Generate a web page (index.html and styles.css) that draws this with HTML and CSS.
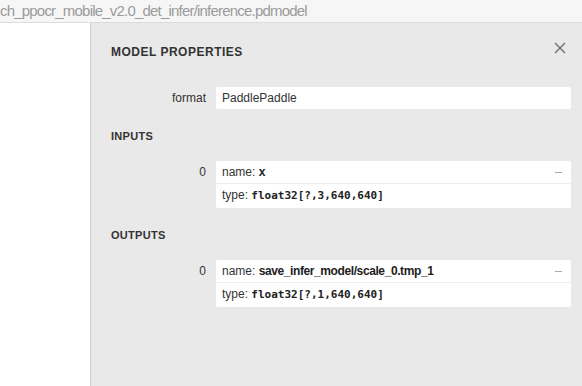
FILE: index.html
```html
<!DOCTYPE html>
<html lang="en">
<head>
    <meta charset="UTF-8">
    <meta name="viewport" content="width=device-width, initial-scale=1.0">
    <title>inference.pdmodel</title>
    <link rel="stylesheet" href="styles.css">
</head>
<body>
    <div class="titlebar">
        <span class="path">ch_ppocr_mobile_v2.0_det_infer/inference.pdmodel</span>
    </div>
    <div class="workspace">
        <div class="graph"></div>
        <aside class="sidebar">
            <div class="sidebar-header">
                <h1 class="sidebar-title">MODEL PROPERTIES</h1>
                <button class="sidebar-close" aria-label="Close">
                    <svg width="12" height="12" viewBox="0 0 12 12">
                        <path d="M1 1L11 11M11 1L1 11" stroke="#777" stroke-width="1.5" fill="none"/>
                    </svg>
                </button>
            </div>

            <div class="item first">
                <div class="item-name">format</div>
                <div class="item-value">
                    <div class="value-line">PaddlePaddle</div>
                </div>
            </div>

            <div class="section-header">INPUTS</div>
            <div class="item">
                <div class="item-name">0</div>
                <div class="item-value tall">
                    <div class="value-line">name: <b>x</b><span class="expander"></span></div>
                    <div class="value-line">type: <code>float32[?,3,640,640]</code></div>
                </div>
            </div>

            <div class="section-header">OUTPUTS</div>
            <div class="item">
                <div class="item-name">0</div>
                <div class="item-value tall">
                    <div class="value-line">name: <b>save_infer_model/scale_0.tmp_1</b><span class="expander"></span></div>
                    <div class="value-line">type: <code>float32[?,1,640,640]</code></div>
                </div>
            </div>
        </aside>
    </div>
</body>
</html>
```

FILE: styles.css
```css
* {
    margin: 0;
    padding: 0;
    box-sizing: border-box;
}

body {
    font-family: 'Liberation Sans', Arial, sans-serif;
    font-size: 12px;
    color: #333333;
    height: 100vh;
    overflow: hidden;
    background-color: #ffffff;
}

.titlebar {
    height: 23px;
    line-height: 22px;
    background-color: #f6f6f6;
    border-bottom: 1px solid #dcdcdc;
    color: #9b9b9b;
    font-family: 'Liberation Sans', Arial, sans-serif;
    font-size: 15px;
    letter-spacing: -0.8px;
    white-space: nowrap;
    overflow: hidden;
}

.workspace {
    display: flex;
    height: calc(100vh - 23px);
}

.graph {
    width: 90px;
    background-color: #ffffff;
}

.sidebar {
    flex: 1;
    background-color: #e9e9e9;
    border-left: 1px solid #cfcfcf;
    padding: 0 11px 0 20px;
}

.sidebar-header {
    position: relative;
    padding-top: 22px;
}

.sidebar-title {
    font-size: 12px;
    font-weight: bold;
    letter-spacing: 0.5px;
    line-height: 14px;
    color: #333333;
}

.sidebar-close {
    position: absolute;
    top: 19px;
    right: 5px;
    width: 12px;
    height: 12px;
    border: none;
    background: none;
    display: flex;
    cursor: pointer;
}

.item {
    display: grid;
    grid-template-columns: 95px 1fr;
    column-gap: 10px;
}

.item.first {
    margin-top: 28px;
}

.item-name {
    text-align: right;
    line-height: 14px;
    padding-top: 4px;
}

.item-value {
    background-color: #ffffff;
    border-radius: 2px;
}

.item-value.tall {
    padding-bottom: 1px;
}

.value-line {
    position: relative;
    padding: 4px 6px;
    line-height: 14px;
}

.value-line + .value-line {
    border-top: 1px solid #eeeeee;
}

.value-line b {
    color: #222222;
    letter-spacing: -0.4px;
}

.value-line code {
    font-family: 'DejaVu Sans Mono', 'Liberation Mono', monospace;
    font-size: 11px;
    font-weight: bold;
    color: #222222;
}

.expander {
    position: absolute;
    right: 9px;
    top: 11px;
    width: 7px;
    height: 1px;
    background-color: #aaaaaa;
}

.section-header {
    margin: 20px 0 18px;
    font-size: 11px;
    font-weight: bold;
    letter-spacing: 0.3px;
    line-height: 14px;
    color: #333333;
}
```
